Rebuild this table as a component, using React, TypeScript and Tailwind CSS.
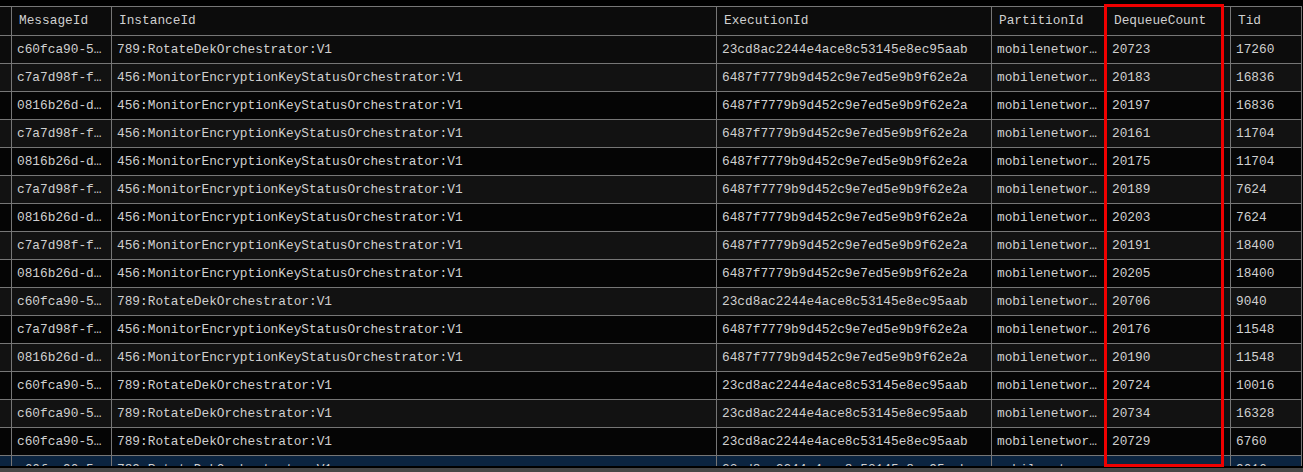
import React from "react";

const A = ["c60fca90-5…", "789:RotateDekOrchestrator:V1", "23cd8ac2244e4ace8c53145e8ec95aab"];
const B = ["c7a7d98f-f…", "456:MonitorEncryptionKeyStatusOrchestrator:V1", "6487f7779b9d452c9e7ed5e9b9f62e2a"];
const C = ["0816b26d-d…", "456:MonitorEncryptionKeyStatusOrchestrator:V1", "6487f7779b9d452c9e7ed5e9b9f62e2a"];

const rows: [string[], string, string][] = [
  [A, "20723", "17260"],
  [B, "20183", "16836"],
  [C, "20197", "16836"],
  [B, "20161", "11704"],
  [C, "20175", "11704"],
  [B, "20189", "7624"],
  [C, "20203", "7624"],
  [B, "20191", "18400"],
  [C, "20205", "18400"],
  [A, "20706", "9040"],
  [B, "20176", "11548"],
  [C, "20190", "11548"],
  [A, "20724", "10016"],
  [A, "20734", "16328"],
  [A, "20729", "6760"],
  [A, "20727", "9016"],
];

const headers = ["MessageId", "InstanceId", "ExecutionId", "PartitionId", "DequeueCount", "Tid"];

const cell = "border-r border-b border-[#767676] overflow-hidden whitespace-nowrap flex items-center";

export default function App() {
  return (
    <div
      className="relative w-[1303px] h-[472px] bg-black overflow-hidden text-[#d0d0d0] text-[12.8px]"
      style={{ fontFamily: '"Liberation Mono", "DejaVu Sans Mono", monospace' }}
    >
      <div className="pt-[6px] h-[466px] overflow-hidden">
        <div className="grid grid-cols-[12px_100px_605px_275px_115px_124px_71px] border-t border-[#767676] w-[1302px]">
          <div className={`${cell} h-[29px] bg-[#0c0c0c]`} />
          {headers.map((h) => (
            <div key={h} className={`${cell} h-[29px] bg-[#0c0c0c] pl-[7px]`}>
              {h}
            </div>
          ))}
          {rows.map(([r, dq, tid], i) => {
            const bg =
              i === 15
                ? "bg-[#0b2440]"
                : i === 0
                ? "bg-[#0c0c0c]"
                : i % 2 === 1
                ? "bg-[#121212]"
                : "bg-[#050505]";
            const vals = [r[0], r[1], r[2], "mobilenetwor…", dq, tid];
            return (
              <React.Fragment key={i}>
                <div className={`${cell} h-[28px] ${bg}`} />
                {vals.map((v, j) => (
                  <div key={j} className={`${cell} h-[28px] ${bg} pl-[5px]`}>
                    {v}
                  </div>
                ))}
              </React.Fragment>
            );
          })}
        </div>
      </div>
      <div className="h-[2px] bg-black" />
      <div className="h-[4px] bg-[#464646]" />
      <div className="absolute left-[1104px] top-[4px] w-[120px] h-[463px] border-[3px] border-[#f00000] pointer-events-none" />
    </div>
  );
}
